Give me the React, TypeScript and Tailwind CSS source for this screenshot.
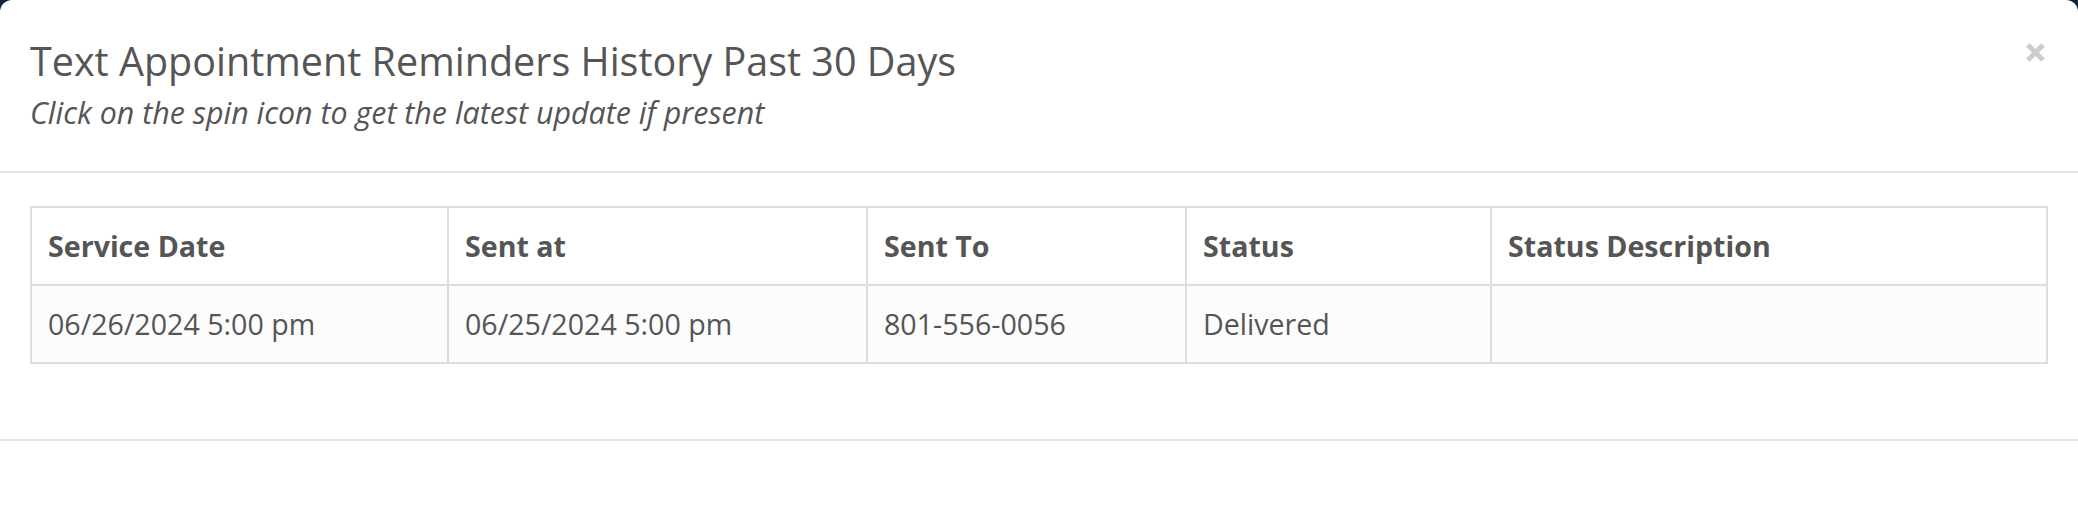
const columns = ['Service Date', 'Sent at', 'Sent To', 'Status', 'Status Description'];

const rows = [['06/26/2024 5:00 pm', '06/25/2024 5:00 pm', '801-556-0056', 'Delivered', '']];

export default function App() {
  return (
    <div className="w-full h-[506px] bg-[#13233a] overflow-hidden" style={{ fontFamily: '"Open Sans", "Noto Sans", sans-serif' }}>
      <div className="h-full bg-white rounded-t-[12px] text-[#555555]">
        {/* header */}
        <div className="relative h-[173px] px-[30px] pt-[33px] border-b-2 border-[#e5e5e5]">
          <h4 className="text-[39.5px] leading-[56px] font-normal">Text Appointment Reminders History Past 30 Days</h4>
          <p className="mt-[4px] text-[30.4px] leading-[40px] italic">Click on the spin icon to get the latest update if present</p>
          <button className="absolute right-[32px] top-[42px] w-[21px] h-[21px]" aria-label="Close">
            <svg viewBox="0 0 21 21" className="w-[21px] h-[21px]">
              <path d="M3 3 L18 18 M18 3 L3 18" stroke="#cccccc" strokeWidth="5" fill="none" />
            </svg>
          </button>
        </div>

        {/* body */}
        <div className="h-[268px] px-[30px] pt-[33px] border-b-2 border-[#e5e5e5]">
          <div className="grid grid-cols-[417px_419px_319px_305px_1fr] border-l-2 border-t-2 border-[#dddddd] text-[28.6px] leading-[40px]">
            {columns.map((c) => (
              <div key={c} className="px-[16px] py-[18px] border-r-2 border-b-2 border-[#dddddd] font-bold bg-white">
                {c}
              </div>
            ))}
            {rows.map((r, i) =>
              r.map((cell, j) => (
                <div key={`${i}-${j}`} className="px-[16px] py-[18px] h-[78px] border-r-2 border-b-2 border-[#dddddd] bg-[#fcfcfc]">
                  {cell}
                </div>
              ))
            )}
          </div>
        </div>
      </div>
    </div>
  );
}
